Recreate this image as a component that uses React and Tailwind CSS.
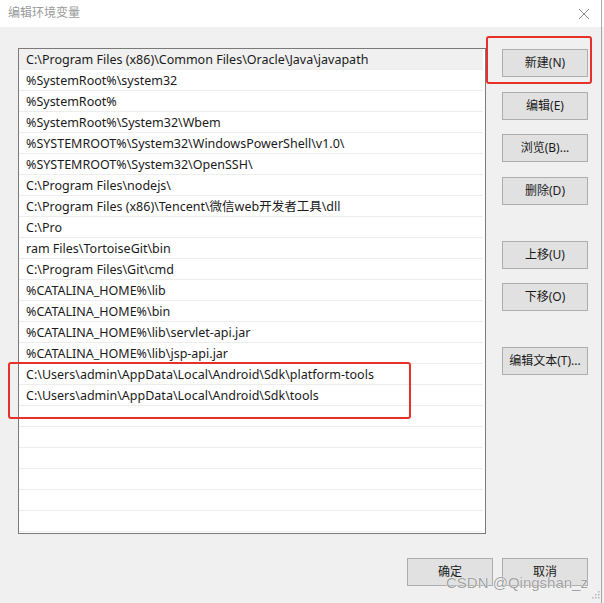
const paths = [
  'C:\\Program Files (x86)\\Common Files\\Oracle\\Java\\javapath',
  '%SystemRoot%\\system32',
  '%SystemRoot%',
  '%SystemRoot%\\System32\\Wbem',
  '%SYSTEMROOT%\\System32\\WindowsPowerShell\\v1.0\\',
  '%SYSTEMROOT%\\System32\\OpenSSH\\',
  'C:\\Program Files\\nodejs\\',
  'C:\\Program Files (x86)\\Tencent\\微信web开发者工具\\dll',
  'C:\\Pro',
  'ram Files\\TortoiseGit\\bin',
  'C:\\Program Files\\Git\\cmd',
  '%CATALINA_HOME%\\lib',
  '%CATALINA_HOME%\\bin',
  '%CATALINA_HOME%\\lib\\servlet-api.jar',
  '%CATALINA_HOME%\\lib\\jsp-api.jar',
  'C:\\Users\\admin\\AppData\\Local\\Android\\Sdk\\platform-tools',
  'C:\\Users\\admin\\AppData\\Local\\Android\\Sdk\\tools',
]

const font = { fontFamily: '"Noto Sans", "Noto Sans CJK SC", sans-serif' }

function Btn({ children, className = '' }) {
  return (
    <div className={`w-[86px] h-[28px] flex items-center justify-center bg-[#e1e1e1] border border-[#adadad] text-[12px] text-[#1a1a1a] ${className}`}>
      {children}
    </div>
  )
}

export default function App() {
  const rows = [...paths, ...Array(6).fill('')]

  return (
    <div className="relative w-[604px] h-[603px] bg-[#f0f0f0] overflow-hidden" style={font}>
      {/* 标题栏 */}
      <div className="h-[27px] bg-white flex items-center pl-[8px] pr-[12px]">
        <span className="text-[12px] text-[#9a9a9a] flex-1 -mt-[2px]">编辑环境变量</span>
        <svg width="12" height="12" viewBox="0 0 12 12" className="mr-[2px]">
          <path d="M1 1L11 11M11 1L1 11" stroke="#8a8a8a" strokeWidth="1" />
        </svg>
      </div>

      <div className="flex pl-[18px] pt-[21px]">
        {/* 列表 */}
        <div className="w-[468px] h-[486px] bg-white border border-[#7a7a7a] overflow-hidden">
          {rows.map((p, i) => (
            <div
              key={i}
              className={`h-[21px] flex items-center pl-[7px] pt-[3px] mr-[2px] border-b border-[#ededed] text-[12.5px] text-[#1a1a1a] whitespace-nowrap ${i === 0 ? 'bg-[#f0f0f0]' : ''}`}
            >
              {p}
            </div>
          ))}
        </div>

        {/* 按钮 */}
        <div className="ml-[16px] pt-[1px] flex flex-col">
          <Btn>新建(N)</Btn>
          <Btn className="mt-[15px]">编辑(E)</Btn>
          <Btn className="mt-[14px]">浏览(B)...</Btn>
          <Btn className="mt-[15px]">删除(D)</Btn>
          <Btn className="mt-[36px]">上移(U)</Btn>
          <Btn className="mt-[14px]">下移(O)</Btn>
          <Btn className="mt-[36px]">编辑文本(T)...</Btn>
        </div>
      </div>

      {/* 底部按钮 */}
      <div className="flex justify-end gap-[9px] pr-[16px] mt-[24px]">
        <Btn>确定</Btn>
        <Btn>取消</Btn>
      </div>

      {/* 右边框 */}
      <div className="absolute top-0 right-[2px] w-px h-full bg-[#a8a8a8]" />

      {/* 红框 */}
      <div className="absolute left-[486px] top-[36px] w-[106px] h-[48px] border-2 border-[#e8302b] rounded-[3px]" />
      <div className="absolute left-[8px] top-[362px] w-[403px] h-[57px] border-2 border-[#e8302b] rounded-[3px]" />

      {/* 水印 */}
      <div
        className="absolute left-[446px] top-[572px] text-[15px] text-[#a0a0a0] whitespace-nowrap"
        style={{ fontFamily: '"Liberation Sans", sans-serif', textShadow: '0 0 1px #fff, 0 0 1px #fff' }}
      >
        CSDN @Qingshan_z
      </div>

      {/* 调整大小手柄 */}
      <svg className="absolute right-[4px] bottom-[4px]" width="8" height="8" viewBox="0 0 8 8">
        <rect x="6" y="0" width="1.5" height="1.5" fill="#b5b5b5" />
        <rect x="3" y="3" width="1.5" height="1.5" fill="#b5b5b5" />
        <rect x="6" y="3" width="1.5" height="1.5" fill="#b5b5b5" />
        <rect x="0" y="6" width="1.5" height="1.5" fill="#b5b5b5" />
        <rect x="3" y="6" width="1.5" height="1.5" fill="#b5b5b5" />
        <rect x="6" y="6" width="1.5" height="1.5" fill="#b5b5b5" />
      </svg>
    </div>
  )
}
